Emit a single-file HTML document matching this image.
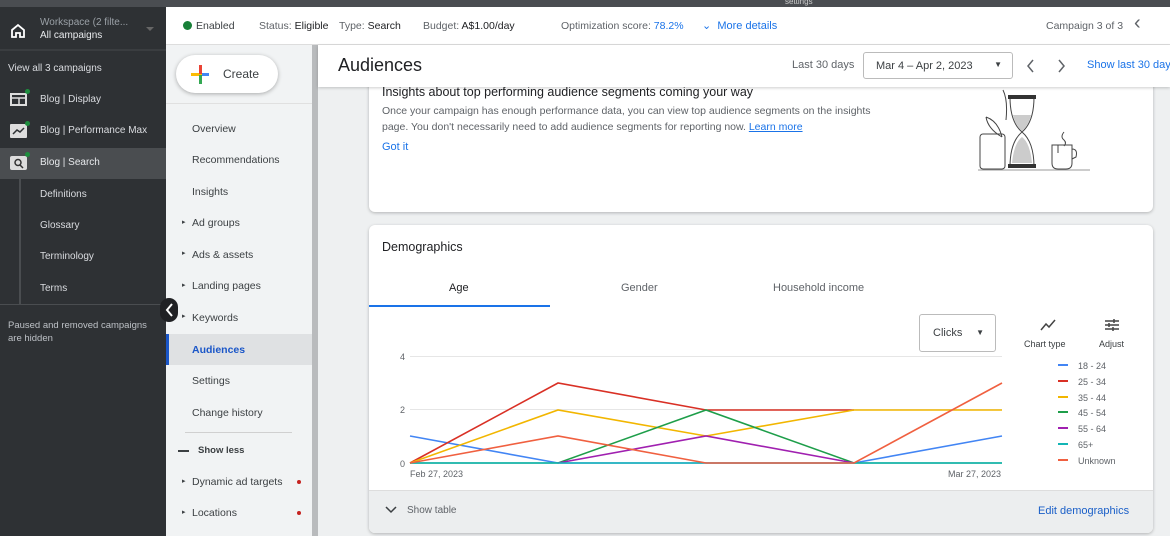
<!DOCTYPE html>
<html><head><meta charset="utf-8"><style>
*{box-sizing:border-box;margin:0;padding:0}
body{width:1170px;height:536px;overflow:hidden;position:relative;font-family:"Liberation Sans",sans-serif;background:#eef0f1;color:#3c4043}
.a{position:absolute;white-space:nowrap}
.side{position:absolute;left:0;top:7px;width:166px;height:529px;background:#2e3134;color:#dadce0;font-size:10px}
.nav{position:absolute;left:166px;top:45px;width:146px;height:491px;background:#f1f3f4;font-size:10.5px;color:#3c4043}
.card{position:absolute;background:#fff;border-radius:6px;box-shadow:0 1px 3px rgba(0,0,0,.25)}
.blue{color:#1a73e8}
</style></head><body>
<div class="a" style="left:0;top:0;width:1170px;height:7px;background:#4a4d51"></div>
<div class="a" style="left:785px;top:-3px;font-size:8px;color:#ccc">settings</div>
<!-- sidebar -->
<div class="side">
 <div class="a" style="left:0;top:0;width:166px;height:44px;border-bottom:2px solid #3a3d40"></div>
 <svg class="a" style="left:10px;top:16px" width="16" height="16" viewBox="0 0 16 16"><path d="M2 7L8 2l6 5v7H10v-4H6v4H2z" fill="none" stroke="#fff" stroke-width="1.8"/></svg>
 <div class="a" style="left:40px;top:10px;color:#9aa0a6">Workspace (2 filte...</div>
 <div class="a" style="left:40px;top:23px;color:#e8eaed">All campaigns</div>
 <div class="a" style="left:146px;top:20px;border:4px solid transparent;border-top-color:#666"></div>
 <div class="a" style="left:8px;top:56px">View all 3 campaigns</div>
 <svg class="a" style="left:10px;top:86px" width="17" height="13"><rect x="1" y="1" width="15" height="11" fill="none" stroke="#ddd" stroke-width="2"/><path d="M1 5h15M9 5v7" stroke="#ddd" stroke-width="1.5"/></svg>
 <div class="a" style="left:25px;top:82px;width:5px;height:5px;border-radius:50%;background:#1e8e3e"></div>
 <div class="a" style="left:40px;top:87px">Blog | Display</div>
 <svg class="a" style="left:10px;top:117px" width="17" height="14"><rect x="0" y="0" width="17" height="14" rx="1" fill="#ddd"/><path d="M3 10l4-4 3 2 4-4" fill="none" stroke="#2e3134" stroke-width="1.5"/></svg>
 <div class="a" style="left:25px;top:114px;width:5px;height:5px;border-radius:50%;background:#1e8e3e"></div>
 <div class="a" style="left:40px;top:118px">Blog | Performance Max</div>
 <div class="a" style="left:0;top:141px;width:166px;height:31px;background:#4a4d50"></div>
 <svg class="a" style="left:10px;top:149px" width="17" height="14"><rect x="0" y="0" width="17" height="14" rx="2" fill="#ddd"/><circle cx="8" cy="6.5" r="3" fill="none" stroke="#333" stroke-width="1.5"/><path d="M10 9l3 3" stroke="#333" stroke-width="1.5"/></svg>
 <div class="a" style="left:25px;top:145px;width:5px;height:5px;border-radius:50%;background:#1e8e3e"></div>
 <div class="a" style="left:40px;top:150px;color:#e8eaed">Blog | Search</div>
 <div class="a" style="left:19px;top:172px;width:2px;height:126px;background:#4a4d50"></div>
 <div class="a" style="left:40px;top:182px">Definitions</div>
 <div class="a" style="left:40px;top:213px">Glossary</div>
 <div class="a" style="left:40px;top:244px">Terminology</div>
 <div class="a" style="left:40px;top:276px">Terms</div>
 <div class="a" style="left:0;top:297px;width:166px;height:1px;background:#4a4d50"></div>
 <div class="a" style="left:8px;top:312px;font-size:9.5px;color:#bdc1c6;line-height:13px">Paused and removed campaigns<br>are hidden</div>
</div>
<!-- top bar -->
<div class="a" style="left:166px;top:7px;width:1004px;height:38px;background:#fff;border-bottom:1px solid #ddd;font-size:10.5px;color:#5f6368">
 <div class="a" style="left:17px;top:14px;width:9px;height:9px;border-radius:50%;background:#188038"></div>
 <div class="a" style="left:30px;top:13px;color:#3c4043">Enabled</div>
 <div class="a" style="left:93px;top:13px">Status: <span style="color:#202124">Eligible</span></div>
 <div class="a" style="left:173px;top:13px">Type: <span style="color:#202124">Search</span></div>
 <div class="a" style="left:257px;top:13px">Budget: <span style="color:#202124">A$1.00/day</span></div>
 <div class="a" style="left:395px;top:13px">Optimization score: <span class="blue">78.2%</span></div>
 <div class="a blue" style="left:536px;top:12px;font-size:11px">⌄ &nbsp;More details</div>
 <div class="a" style="left:880px;top:13px">Campaign 3 of 3</div>
 <div class="a" style="left:968px;top:5px;font-size:20px">‹</div>
</div>
<!-- nav -->
<div class="nav">
 <div class="a" style="left:10px;top:10px;width:102px;height:38px;background:#fff;border-radius:19px;box-shadow:0 1px 4px rgba(0,0,0,.3)"></div>
 <div class="a" style="left:25px;top:28px;width:18px;height:3px;background:#fbbc04"></div>
 <div class="a" style="left:33px;top:20px;width:3px;height:9px;background:#ea4335"></div>
 <div class="a" style="left:33px;top:30px;width:3px;height:9px;background:#34a853"></div>
 <div class="a" style="left:36px;top:28px;width:7px;height:3px;background:#4285f4"></div>
 <div class="a" style="left:57px;top:22px;font-size:12px;color:#3c4043">Create</div>
 <div class="a" style="left:0;top:58px;width:146px;height:1px;background:#e0e0e0"></div>
 <div class="a" style="left:26px;top:78px">Overview</div>
 <div class="a" style="left:26px;top:109px">Recommendations</div>
 <div class="a" style="left:26px;top:141px">Insights</div>
 <div class="a" style="left:16px;top:173px;font-size:7px">▸</div><div class="a" style="left:26px;top:172px">Ad groups</div>
 <div class="a" style="left:16px;top:204px;font-size:7px">▸</div><div class="a" style="left:26px;top:204px">Ads &amp; assets</div>
 <div class="a" style="left:16px;top:236px;font-size:7px">▸</div><div class="a" style="left:26px;top:235px">Landing pages</div>
 <div class="a" style="left:16px;top:267px;font-size:7px">▸</div><div class="a" style="left:26px;top:267px">Keywords</div>
 <div class="a" style="left:0;top:289px;width:146px;height:31px;background:#dfe1e3;border-left:3px solid #1a56c8"></div>
 <div class="a" style="left:26px;top:299px;color:#1a56c8;font-weight:bold">Audiences</div>
 <div class="a" style="left:26px;top:330px">Settings</div>
 <div class="a" style="left:26px;top:362px">Change history</div>
 <div class="a" style="left:19px;top:387px;width:107px;height:1px;background:#d0d0d0"></div>
 <div class="a" style="left:12px;top:405px;width:11px;height:1.5px;background:#3c4043"></div>
 <div class="a" style="left:32px;top:400px;font-size:9.5px;font-weight:bold">Show less</div>
 <div class="a" style="left:16px;top:432px;font-size:7px">▸</div><div class="a" style="left:26px;top:431px">Dynamic ad targets</div>
 <div class="a" style="left:131px;top:435px;width:4px;height:4px;border-radius:50%;background:#c5221f"></div>
 <div class="a" style="left:16px;top:463px;font-size:7px">▸</div><div class="a" style="left:26px;top:462px">Locations</div>
 <div class="a" style="left:131px;top:466px;width:4px;height:4px;border-radius:50%;background:#c5221f"></div>
</div>
<div class="a" style="left:160px;top:298px;width:18px;height:24px;border-radius:12px;background:#202124;z-index:5"></div>
<svg class="a" style="left:163px;top:302px;z-index:6" width="12" height="16"><path d="M9 2L4 8l5 6" fill="none" stroke="#fff" stroke-width="2"/></svg>
<div class="a" style="left:312px;top:45px;width:6px;height:491px;background:#b9bbbd"></div>
<!-- header -->
<div class="a" style="left:318px;top:45px;width:852px;height:42px;background:#fff;box-shadow:0 1px 3px rgba(0,0,0,.2);z-index:2">
 <div class="a" style="left:20px;top:10px;font-size:18px;color:#202124">Audiences</div>
 <div class="a" style="left:474px;top:14px;font-size:11px;color:#5f6368">Last 30 days</div>
 <div class="a" style="left:545px;top:7px;width:150px;height:27px;border:1px solid #bbb;border-radius:3px;font-size:11px;padding:7px 12px;color:#3c4043">Mar 4 – Apr 2, 2023<span style="position:absolute;right:10px;top:7px;font-size:8px">▼</span></div>
 <svg class="a" style="left:706px;top:13px" width="12" height="16"><path d="M9 2L4 8l5 6" fill="none" stroke="#5f6368" stroke-width="1.5"/></svg>
 <svg class="a" style="left:738px;top:13px" width="12" height="16"><path d="M3 2l5 6-5 6" fill="none" stroke="#5f6368" stroke-width="1.5"/></svg>
 <div class="a blue" style="left:769px;top:14px;font-size:11px">Show last 30 days</div>
</div>
<!-- card 1 -->
<div class="card" style="left:369px;top:75px;width:784px;height:137px"></div>
<div class="a" style="left:382px;top:85px;font-size:12.5px;color:#202124">Insights about top performing audience segments coming your way</div>
<div class="a" style="left:382px;top:103px;font-size:10.5px;color:#5f6368;line-height:16px">Once your campaign has enough performance data, you can view top audience segments on the insights<br>page. You don't necessarily need to add audience segments for reporting now. <span class="blue" style="text-decoration:underline">Learn more</span></div>
<div class="a blue" style="left:382px;top:141px;font-size:11px">Got it</div>
<svg class="a" style="left:968px;top:87px" width="125" height="85" viewBox="0 0 125 85">
 <g fill="none" stroke="#444" stroke-width="1">
 <path d="M35 3q5 10 3 30M18 30q12 4 16 20M18 30q2 12 16 20"/>
 <rect x="12" y="47" width="25" height="35" rx="3"/>
 <path d="M40 10h28M40 80h28M42 10q0 25 12 35q12 10 12 35M66 10q0 25-12 35q-12 10-12 35"/>
 <path d="M84 58h20v18q0 6-6 6h-8q-6 0-6-6z M104 62q6 0 4 8l-4 2M90 58v8M96 45q-4 5 0 8q3 3 0 6"/>
 <path d="M10 83h112" stroke="#999"/></g>
 <path d="M40 8h28v4H40zM40 77h28v4H40z" fill="#333"/>
 <path d="M45 28h18q-2 10-9 16q-7-6-9-16zM44 76q2-20 10-26q8 6 10 26z" fill="#ccc"/>
</svg>
<!-- card 2 -->
<div class="card" style="left:369px;top:225px;width:784px;height:308px;overflow:hidden">
 <div class="a" style="left:13px;top:15px;font-size:12.5px;color:#202124">Demographics</div>
 <div class="a" style="left:80px;top:57px;font-size:11px;color:#202124">Age</div>
 <div class="a" style="left:252px;top:57px;font-size:11px;color:#5f6368">Gender</div>
 <div class="a" style="left:404px;top:57px;font-size:11px;color:#5f6368">Household income</div>
 <div class="a" style="left:0;top:80px;width:181px;height:2px;background:#1a73e8"></div>
 <div class="a" style="left:550px;top:89px;width:77px;height:38px;border:1px solid #bbb;border-radius:3px;font-size:11px;padding:12px 13px">Clicks<span style="position:absolute;right:11px;top:13px;font-size:8px">▼</span></div>
 <svg class="a" style="left:670px;top:94px" width="18" height="12"><path d="M2 11l5-6 3 3 6-7" fill="none" stroke="#444" stroke-width="1.5"/></svg>
 <div class="a" style="left:655px;top:114px;font-size:9px">Chart type</div>
 <svg class="a" style="left:735px;top:93px" width="16" height="14"><path d="M1 3h14M1 7h14M1 11h14" stroke="#444" stroke-width="1.5"/><path d="M10 1v4M5 5v4M9 9v4" stroke="#444" stroke-width="1.5"/></svg>
 <div class="a" style="left:730px;top:114px;font-size:9px">Adjust</div>
 <div class="a" style="left:0;top:265px;width:784px;height:43px;background:#eceeef;border-top:1px solid #ddd"></div>
 <svg class="a" style="left:16px;top:280px" width="12" height="10"><path d="M1 2l5 5 5-5" fill="none" stroke="#3c4043" stroke-width="1.5"/></svg>
 <div class="a" style="left:38px;top:280px;font-size:10px;color:#5f6368">Show table</div>
 <div class="a blue" style="left:669px;top:280px;font-size:11px;color:#1a5fc8">Edit demographics</div>
</div>
<svg class="a" style="left:369px;top:340px" width="784" height="150" viewBox="369 340 784 150">
 <g stroke="#e6e6e6"><path d="M410 356.5H1002M410 409.5H1002"/></g>
 <g font-size="9" fill="#5f6368" font-family="Liberation Sans"><text x="400" y="360">4</text><text x="400" y="413">2</text><text x="400" y="467">0</text>
 <text x="410" y="477">Feb 27, 2023</text><text x="948" y="477">Mar 27, 2023</text></g>
 <g fill="none" stroke-width="1.6">
 <polyline stroke="#4285f4" points="410,436 558,463 706,463 854,463 1002,436"/>
 <polyline stroke="#d93025" points="410,463 558,383 706,410 854,410"/>
 <polyline stroke="#f2b600" points="410,463 558,410 706,436 854,410 1002,410"/>
 <polyline stroke="#1e9e4a" points="410,463 558,463 706,410 854,463 1002,463"/>
 <polyline stroke="#a020b0" points="558,463 706,436 854,463"/>
 <polyline stroke="#12b5b5" points="410,463 1002,463"/>
 <polyline stroke="#f06040" points="410,463 558,436 706,463 854,463 1002,383"/>
 </g>
 <g stroke-width="2"><path d="M1058 365h10" stroke="#4285f4"/><path d="M1058 381h10" stroke="#d93025"/><path d="M1058 397h10" stroke="#f2b600"/><path d="M1058 412h10" stroke="#1e9e4a"/><path d="M1058 428h10" stroke="#a020b0"/><path d="M1058 444h10" stroke="#12b5b5"/><path d="M1058 460h10" stroke="#f06040"/></g>
 <g font-size="9" fill="#5f6368" font-family="Liberation Sans"><text x="1078" y="369">18 - 24</text><text x="1078" y="385">25 - 34</text><text x="1078" y="401">35 - 44</text><text x="1078" y="416">45 - 54</text><text x="1078" y="432">55 - 64</text><text x="1078" y="448">65+</text><text x="1078" y="464">Unknown</text></g>
</svg>
</body></html>
